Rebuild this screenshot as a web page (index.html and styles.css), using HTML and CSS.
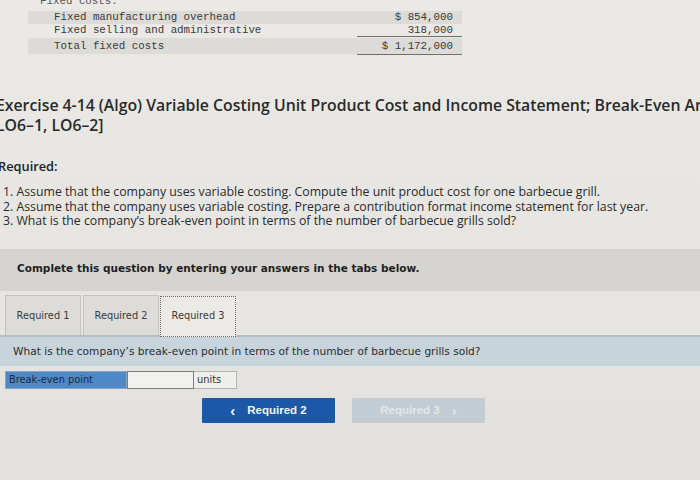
FILE: index.html
```html
<!DOCTYPE html>
<html>
<head>
<meta charset="utf-8">
<link rel="stylesheet" href="styles.css">
</head>
<body>
<div class="page">
  <div class="fin">
    <div class="fin-row fin-head"><span class="lbl">Fixed costs:</span><span class="amt"></span></div>
    <div class="fin-row stripe"><span class="lbl ind">Fixed manufacturing overhead</span><span class="amt">$ 854,000</span></div>
    <div class="fin-row"><span class="lbl ind">Fixed selling and administrative</span><span class="amt under">318,000</span></div>
    <div class="fin-row stripe total"><span class="lbl ind">Total fixed costs</span><span class="amt under">$ 1,172,000</span></div>
  </div>

  <h1 class="title">Exercise 4-14 (Algo) Variable Costing Unit Product Cost and Income Statement; Break-Even An<br>LO6–1, LO6–2]</h1>

  <h2 class="req">Required:</h2>
  <ol class="list">
    <li>1. Assume that the company uses variable costing. Compute the unit product cost for one barbecue grill.</li>
    <li>2. Assume that the company uses variable costing. Prepare a contribution format income statement for last year.</li>
    <li>3. What is the company’s break-even point in terms of the number of barbecue grills sold?</li>
  </ol>

  <div class="complete">Complete this question by entering your answers in the tabs below.</div>

  <div class="tabs">
    <div class="tab">Required 1</div>
    <div class="tab">Required 2</div>
    <div class="tab active">Required 3</div>
  </div>

  <div class="question">What is the company’s break-even point in terms of the number of barbecue grills sold?</div>

  <div class="answer">
    <div class="ans-label">Break-even point</div>
    <div class="ans-input"></div>
    <div class="ans-unit">units</div>
  </div>

  <div class="nav">
    <div class="btn prev"><span class="chev">&lsaquo;</span>Required 2</div>
    <div class="btn next">Required 3<span class="chev">&rsaquo;</span></div>
  </div>
</div>
</body>
</html>
```

FILE: styles.css
```css
html, body {
  margin: 0;
  padding: 0;
}
body {
  width: 700px;
  height: 480px;
  overflow: hidden;
  background: #e6e4e0;
}
.page {
  width: 700px;
  height: 480px;
  overflow: hidden;
  background: linear-gradient(180deg, #eae9e5 0%, #e7e6e2 40%, #e3e1dd 100%);
}
.fin {
  margin-left: 28px;
  width: 434px;
  margin-top: -4px;
  font-family: "Liberation Mono", monospace;
  font-size: 10.8px;
  color: #3a3a3a;
}
.fin-row {
  display: grid;
  grid-template-columns: 1fr 105px;
  height: 13px;
  line-height: 13px;
}
.fin-head {
  height: 15px;
  line-height: 11px;
}
.fin-head .lbl {
  padding-left: 12px;
  color: #555;
}
.stripe {
  background: #dcdbd7;
}
.total {
  height: 16px;
  line-height: 17px;
  margin-top: 1px;
}
.ind {
  padding-left: 26px;
}
.amt {
  text-align: right;
  padding-right: 9px;
  white-space: pre;
}
.under {
  border-bottom: 1px solid #6f6f6f;
}
.fin-row .amt.under {
  height: 12px;
}
.total .amt.under {
  height: 16px;
}

.title {
  margin: 41px 0 0 -4px;
  font-family: "Open Sans", Lato, sans-serif;
  font-weight: 600;
  font-size: 15.8px;
  line-height: 20px;
  letter-spacing: 0;
  color: #2a2a2a;
  white-space: nowrap;
  overflow: hidden;
}
.req {
  margin: 23px 0 0 -2px;
  font-family: "Open Sans", sans-serif;
  font-weight: 600;
  font-size: 12.8px;
  line-height: 16px;
  color: #222;
}
.list {
  list-style: none;
  margin: 11px 0 0 3px;
  padding: 0;
  font-family: "Open Sans", sans-serif;
  font-size: 12.3px;
  line-height: 14.6px;
  letter-spacing: 0;
  white-space: nowrap;
  color: #2b2b2b;
}
.complete {
  margin-top: 20px;
  height: 42px;
  background: #d5d4d0;
  padding-left: 17px;
  font-family: "DejaVu Sans", Verdana, sans-serif;
  font-weight: 700;
  font-size: 10.5px;
  line-height: 36px;
  color: #1f1f1f;
  box-sizing: border-box;
  padding-top: 1px;
}
.tabs {
  display: flex;
  align-items: flex-end;
  height: 46px;
  padding-left: 5px;
  box-sizing: border-box;
  border-bottom: 2px solid #b9bcbd;
  background: #e6e5e1;
}
.tab {
  width: 76px;
  height: 40px;
  margin-right: 2px;
  box-sizing: border-box;
  border: 1px solid #c4c3bf;
  border-bottom: 0;
  background: #dddcd8;
  font-family: "DejaVu Sans", Verdana, sans-serif;
  font-size: 9.8px;
  color: #3a3a3a;
  display: flex;
  align-items: center;
  justify-content: center;
}
.tab.active {
  margin-left: -1px;
  background: #ebeae6;
  border: 1px dotted #6a6a6a;
  height: 41px;
  margin-bottom: -2px;
  padding-bottom: 2px;
}
.question {
  height: 29px;
  background: #c7d4dc;
  padding-left: 13px;
  font-family: "DejaVu Sans", Verdana, sans-serif;
  font-size: 10.6px;
  line-height: 29px;
  color: #2c2c2c;
}
.answer {
  display: flex;
  margin: 5px 0 0 5px;
  height: 18px;
  font-family: "DejaVu Sans", Verdana, sans-serif;
  font-size: 9.8px;
  line-height: 16px;
}
.ans-label {
  width: 122px;
  background: #4f88c6;
  border: 1px solid #8aa3b8;
  box-sizing: border-box;
  padding-left: 3px;
  color: #1a2a3a;
}
.ans-input {
  width: 67px;
  background: #f1f1ef;
  border: 1px solid #7a7d80;
  box-sizing: border-box;
}
.ans-unit {
  width: 43px;
  background: #eeeeec;
  border: 1px solid #b5b5b3;
  border-left: 0;
  box-sizing: border-box;
  padding-left: 3px;
  color: #333;
}
.nav {
  display: flex;
  margin: 9px 0 0 202px;
  gap: 17px;
}
.btn {
  width: 133px;
  height: 25px;
  box-sizing: border-box;
  display: flex;
  align-items: center;
  justify-content: center;
  font-family: "Liberation Sans", Arial, sans-serif;
  font-weight: 700;
  font-size: 11.5px;
  border-radius: 1px;
}
.prev {
  background: #1b59a8;
  color: #f2f5fa;
}
.prev .chev {
  margin-right: 12px;
  font-size: 15px;
  font-weight: 700;
}
.next {
  background: #c3ccd3;
  color: #e3e8ec;
}
.next .chev {
  margin-left: 12px;
  font-size: 15px;
}
```
